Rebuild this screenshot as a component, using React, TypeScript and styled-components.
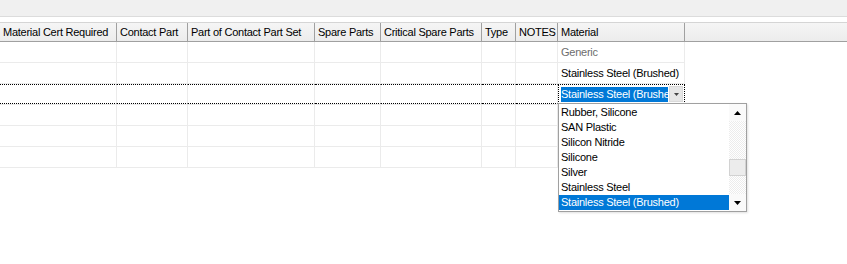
import React from 'react';
import styled, { createGlobalStyle } from 'styled-components';

const GlobalStyle = createGlobalStyle`
  html, body {
    margin: 0;
    padding: 0;
    background: #fff;
  }
  body {
    font-family: "Liberation Sans", Arial, sans-serif;
    font-size: 11px;
    letter-spacing: -0.25px;
    color: #000;
  }
`;

const columns = [
  { title: 'Material Cert Required', width: 117 },
  { title: 'Contact Part', width: 71 },
  { title: 'Part of Contact Part Set', width: 127 },
  { title: 'Spare Parts', width: 66 },
  { title: 'Critical Spare Parts', width: 101 },
  { title: 'Type', width: 34 },
  { title: 'NOTES', width: 42 },
  { title: 'Material', width: 127 },
];

const options = [
  'Rubber, Silicone',
  'SAN Plastic',
  'Silicon Nitride',
  'Silicone',
  'Silver',
  'Stainless Steel',
  'Stainless Steel (Brushed)',
];

const Page = styled.div`
  width: 847px;
  height: 264px;
  overflow: hidden;
  display: flex;
  flex-direction: column;
`;

const TopBar = styled.div`
  height: 16px;
  background: #f0f0f0;
  border-bottom: 1px solid #dcdcdc;
  flex: none;
`;

const Gap = styled.div`
  height: 5px;
  flex: none;
`;

const Grid = styled.div`
  position: relative;
  flex: 1;
`;

const Header = styled.div`
  display: flex;
  height: 18px;
  border-top: 1px solid #d5d5d5;
  border-bottom: 1px solid #a0a0a0;
  background: linear-gradient(#f5f5f5, #ececec);
`;

const HeaderCell = styled.div<{ $w?: number }>`
  ${(p) => (p.$w ? `width: ${p.$w}px;` : 'flex: 1;')}
  flex-shrink: 0;
  box-sizing: border-box;
  border-right: ${(p) => (p.$w ? '1px solid #a0a0a0' : 'none')};
  padding-left: 3px;
  line-height: 18px;
  white-space: nowrap;
  overflow: hidden;
`;

const Row = styled.div`
  display: flex;
  width: 685px;
  height: 21px;
  box-sizing: border-box;
  border-bottom: 1px solid #ebebeb;
`;

const Cell = styled.div<{ $w: number; $focus?: boolean; $muted?: boolean }>`
  width: ${(p) => p.$w}px;
  flex-shrink: 0;
  box-sizing: border-box;
  border-right: 1px solid #ebebeb;
  ${(p) => (p.$focus ? 'border-top: 1px dotted #000; border-bottom: 1px dotted #000;' : '')}
  padding-left: 3px;
  display: flex;
  align-items: center;
  white-space: nowrap;
  overflow: hidden;
  color: ${(p) => (p.$muted ? '#6d6d6d' : '#000')};
`;

const EditorCell = styled.div<{ $w: number }>`
  width: ${(p) => p.$w}px;
  flex-shrink: 0;
  box-sizing: border-box;
  border: 1px dotted #000;
  display: flex;
  align-items: center;
  padding: 0 1px 0 2px;
  gap: 1px;
`;

const EditorText = styled.span`
  flex: 1;
  overflow: hidden;
  white-space: nowrap;
  background: #0078d7;
  color: #fff;
  line-height: 15px;
`;

const ComboButton = styled.div`
  width: 14px;
  height: 16px;
  flex: none;
  box-sizing: border-box;
  background: #e6e6e6;
  border: 1px solid #dadada;
  display: flex;
  align-items: center;
  justify-content: center;
`;

const DropList = styled.div`
  position: absolute;
  left: 558px;
  top: 81px;
  width: 189px;
  height: 109px;
  box-sizing: border-box;
  border: 1px solid #a0a0a0;
  background: #fff;
  display: flex;
  box-shadow: 1px 1px 2px rgba(0, 0, 0, 0.12);
`;

const Items = styled.div`
  flex: 1;
  padding-top: 1px;
  display: flex;
  flex-direction: column;
`;

const Item = styled.div<{ $selected?: boolean }>`
  height: 15px;
  line-height: 15px;
  padding-left: 2px;
  white-space: nowrap;
  background: ${(p) => (p.$selected ? '#0078d7' : 'transparent')};
  color: ${(p) => (p.$selected ? '#fff' : '#000')};
`;

const ScrollBar = styled.div`
  width: 17px;
  flex: none;
  display: flex;
  flex-direction: column;
  background: repeating-conic-gradient(#ececec 0 25%, #fff 0 50%) 0 0 / 2px 2px;
`;

const ScrollButton = styled.div`
  height: 17px;
  flex: none;
  background: #fafafa;
  display: flex;
  align-items: center;
  justify-content: center;
`;

const Track = styled.div`
  flex: 1;
  display: flex;
  flex-direction: column;
  padding-top: 38px;
`;

const Thumb = styled.div`
  height: 17px;
  box-sizing: border-box;
  background: #ececec;
  border: 1px solid #d2d2d2;
`;

const Arrow = ({ up, size = 7, color = '#000' }: { up?: boolean; size?: number; color?: string }) => {
  const h = Math.ceil(size / 2);
  return (
    <svg width={size} height={h} viewBox={`0 0 ${size} ${h}`}>
      {up ? (
        <polygon points={`0,${h} ${size},${h} ${size / 2},0`} fill={color} />
      ) : (
        <polygon points={`0,0 ${size},0 ${size / 2},${h}`} fill={color} />
      )}
    </svg>
  );
};

const materialByRow = ['Generic', 'Stainless Steel (Brushed)', null, '', '', ''];

export default function App() {
  return (
    <>
      <GlobalStyle />
      <Page>
        <TopBar />
        <Gap />
        <Grid>
          <Header>
            {columns.map((c) => (
              <HeaderCell key={c.title} $w={c.width}>
                {c.title}
              </HeaderCell>
            ))}
            <HeaderCell />
          </Header>
          {materialByRow.map((mat, r) => {
            const focus = r === 2;
            return (
              <Row key={r}>
                {columns.map((c, i) => {
                  const last = i === columns.length - 1;
                  if (last && focus) {
                    return (
                      <EditorCell key={c.title} $w={c.width}>
                        <EditorText>Stainless Steel (Brushe</EditorText>
                        <ComboButton>
                          <Arrow size={5} color="#444" />
                        </ComboButton>
                      </EditorCell>
                    );
                  }
                  return (
                    <Cell key={c.title} $w={c.width} $focus={focus} $muted={r === 0}>
                      {last ? mat : ''}
                    </Cell>
                  );
                })}
              </Row>
            );
          })}
          <DropList>
            <Items>
              {options.map((o) => (
                <Item key={o} $selected={o === 'Stainless Steel (Brushed)'}>
                  {o}
                </Item>
              ))}
            </Items>
            <ScrollBar>
              <ScrollButton>
                <Arrow up />
              </ScrollButton>
              <Track>
                <Thumb />
              </Track>
              <ScrollButton>
                <Arrow />
              </ScrollButton>
            </ScrollBar>
          </DropList>
        </Grid>
      </Page>
    </>
  );
}
